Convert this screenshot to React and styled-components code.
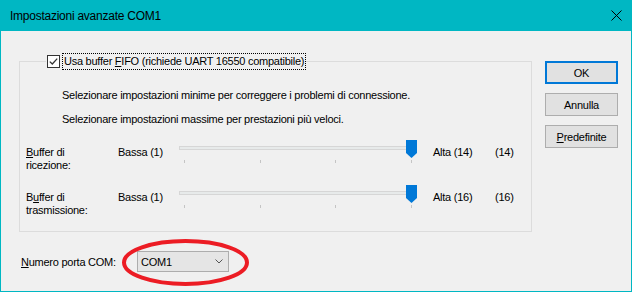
import styled, { createGlobalStyle } from "styled-components";

const GlobalStyle = createGlobalStyle`
  html, body {
    margin: 0;
    padding: 0;
    background: #f0f0f0;
  }
  body {
    font-family: "Liberation Sans", Arial, sans-serif;
    font-size: 11px;
    letter-spacing: -0.25px;
    color: #000;
  }
`;

const TEAL = "#00b7c3";

const Window = styled.div`
  width: 632px;
  height: 292px;
  box-sizing: border-box;
  border: 1px solid ${TEAL};
  border-top: none;
  background: #f0f0f0;
  display: flex;
  flex-direction: column;
`;

const TitleBar = styled.div`
  height: 31px;
  margin: 0 -1px;
  background: ${TEAL};
  display: flex;
  align-items: center;
  justify-content: space-between;
  padding: 0 10px 0 10px;
`;

const Title = styled.span`
  font-size: 12px;
  letter-spacing: -0.25px;
  color: #000;
`;

const Body = styled.div`
  flex: 1;
  display: flex;
  align-items: flex-start;
  padding: 22px 0 0 18px;
`;

const Main = styled.div`
  width: 513px;
  display: flex;
  flex-direction: column;
`;

const GroupBox = styled.fieldset`
  margin: 0;
  padding: 0 6px 14px 6px;
  border: 1px solid #dcdcdc;
  min-width: 0;
`;

const Legend = styled.legend`
  margin-left: 20px;
  padding: 0 1px;
  display: flex;
  align-items: center;
  gap: 3px;
  height: 16px;
`;

const CheckBox = styled.span`
  width: 13px;
  height: 13px;
  box-sizing: border-box;
  border: 1px solid #333;
  background: #fff;
  display: flex;
  align-items: center;
  justify-content: center;
`;

const FocusLabel = styled.span`
  outline: 1px dotted #000;
  line-height: 15px;
  padding: 0 1px;
`;

const Hint = styled.div`
  line-height: 16px;
  padding-left: 36px;
  margin-top: ${p => p.$top}px;
`;

const SliderRow = styled.div`
  display: grid;
  grid-template-columns: 92px 61px 238px 16px 62px auto;
  height: 32px;
  margin-top: ${p => p.$top}px;
`;

const RowLabel = styled.div`
  line-height: 13px;
  padding-top: 6px;
`;

const Slider = styled.div`
  position: relative;
  height: 32px;
`;

const Track = styled.div`
  margin-top: 6px;
  width: 236px;
  height: 4px;
  box-sizing: border-box;
  border: 1px solid #d6d6d6;
  background: #e7eaea;
`;

const Thumb = styled.div`
  position: absolute;
  top: 0;
  left: ${p => p.$left}px;
  width: 11px;
  height: 18px;
  background: #0078d7;
  clip-path: polygon(0 0, 11px 0, 11px 13px, 5.5px 18px, 0 13px);
`;

const Ticks = styled.div`
  margin-top: 10px;
  display: flex;
  justify-content: space-between;
  padding: 0 5px;
`;

const Tick = styled.span`
  width: 1px;
  height: 3px;
  background: #c4c4c4;
`;

const PortRow = styled.div`
  display: flex;
  align-items: center;
  margin-top: 19px;
  padding-left: 2px;
`;

const PortLabel = styled.span`
  width: 116px;
`;

const ComboWrap = styled.div`
  position: relative;
`;

const Combo = styled.div`
  width: 92px;
  height: 21px;
  box-sizing: border-box;
  border: 1px solid #adadad;
  background: #e5e5e5;
  display: flex;
  align-items: center;
  justify-content: space-between;
  padding: 0 5px 0 3px;
`;

const Ellipse = styled.svg`
  position: absolute;
  left: -15px;
  top: -12px;
  overflow: visible;
  pointer-events: none;
`;

const Buttons = styled.div`
  margin: 8px 0 0 13px;
  display: flex;
  flex-direction: column;
  gap: 9px;
`;

const Button = styled.div`
  width: 73px;
  height: 23px;
  box-sizing: border-box;
  background: #e1e1e1;
  border: ${p => (p.$default ? "2px solid #0078d7" : "1px solid #adadad")};
  display: flex;
  align-items: center;
  justify-content: center;
`;

const ticks = [0, 1, 2, 3];

function FifoSlider({ label1, label2, accel, rest, low, high, value, top }) {
  return (
    <SliderRow $top={top}>
      <RowLabel>
        {label1}
        <u>{accel}</u>
        {rest}
        <br />
        {label2}
      </RowLabel>
      <RowLabel>{low}</RowLabel>
      <Slider>
        <Track />
        <Thumb $left={227} />
        <Ticks>
          {ticks.map(t => (
            <Tick key={t} />
          ))}
        </Ticks>
      </Slider>
      <span />
      <RowLabel>{high}</RowLabel>
      <RowLabel>{value}</RowLabel>
    </SliderRow>
  );
}

export default function App() {
  return (
    <>
      <GlobalStyle />
      <Window>
        <TitleBar>
          <Title>Impostazioni avanzate COM1</Title>
          <svg width="11" height="11" viewBox="0 0 11 11">
            <path d="M0.5 0.5 L10.5 10.5 M10.5 0.5 L0.5 10.5" stroke="#000" strokeWidth="1" />
          </svg>
        </TitleBar>
        <Body>
          <Main>
            <GroupBox>
              <Legend>
                <CheckBox>
                  <svg width="9" height="9" viewBox="0 0 9 9">
                    <path d="M0.8 4.6 L3.3 7 L8.2 1.6" fill="none" stroke="#333" strokeWidth="1.3" />
                  </svg>
                </CheckBox>
                <FocusLabel>
                  Usa buffer <u>F</u>IFO (richiede UART 16550 compatibile)
                </FocusLabel>
              </Legend>
              <Hint $top={18}>
                Selezionare impostazioni minime per correggere i problemi di connessione.
              </Hint>
              <Hint $top={8}>Selezionare impostazioni massime per prestazioni più veloci.</Hint>
              <FifoSlider
                top={13}
                label1=""
                accel="B"
                rest="uffer di"
                label2="ricezione:"
                low="Bassa (1)"
                high="Alta (14)"
                value="(14)"
              />
              <FifoSlider
                top={13}
                label1="B"
                accel="u"
                rest="ffer di"
                label2="trasmissione:"
                low="Bassa (1)"
                high="Alta (16)"
                value="(16)"
              />
            </GroupBox>
            <PortRow>
              <PortLabel>
                <u>N</u>umero porta COM:
              </PortLabel>
              <ComboWrap>
                <Combo>
                  <span>COM1</span>
                  <svg width="8" height="5" viewBox="0 0 8 5">
                    <path d="M0.5 0.5 L4 4 L7.5 0.5" fill="none" stroke="#555" strokeWidth="1" />
                  </svg>
                </Combo>
                <Ellipse width="127" height="47">
                  <ellipse cx="63.5" cy="23.5" rx="61.5" ry="21.5" fill="none" stroke="#ec1c24" strokeWidth="4" />
                </Ellipse>
              </ComboWrap>
            </PortRow>
          </Main>
          <Buttons>
            <Button $default>OK</Button>
            <Button>Annulla</Button>
            <Button>
              <span>
                <u>P</u>redefinite
              </span>
            </Button>
          </Buttons>
        </Body>
      </Window>
    </>
  );
}
